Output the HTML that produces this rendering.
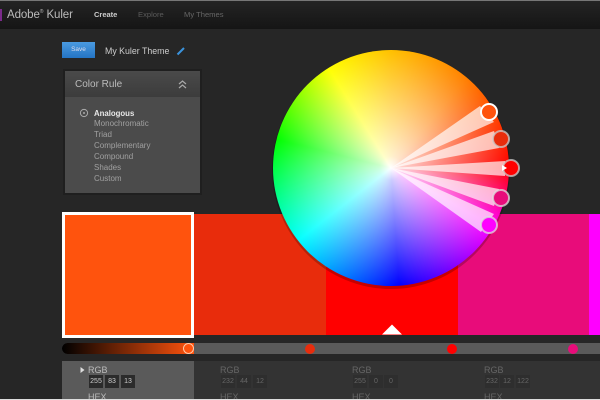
<!DOCTYPE html>
<html><head><meta charset="utf-8"><style>
html,body{margin:0;padding:0;background:#262626}
#p{position:relative;width:600px;height:400px;overflow:hidden;background:#262626;font-family:"Liberation Sans",sans-serif}
#p div{position:absolute}
.t{white-space:nowrap}
.box{background:#2b2b2b;height:13px;top:375px;font-size:7px;line-height:13px;text-align:center;color:#ccc}
.l{font-size:9px;color:#bbb;white-space:nowrap}
#p .d{color:#666}
#p .dbox{background:#2e2e2e;color:#666}
.rule{left:94px;font-size:8px;color:#a0a0a0;white-space:nowrap;line-height:11px}
</style></head><body><div id="p">
<div style="left:0;top:0;width:600px;height:1px;background:#777"></div>
<div style="left:0;top:1px;width:600px;height:28px;background:linear-gradient(#242424,#151515)"></div>
<div style="left:0;top:9px;width:2px;height:12px;background:#7a2a8a"></div>
<div class="t" style="left:7px;top:7px;font-size:11.5px;letter-spacing:-.1px;line-height:16px;color:#bbb">Adobe<sup style="font-size:5px;line-height:0">®</sup> Kuler</div>
<div class="t" style="left:94px;top:10px;font-size:7.5px;line-height:10px;font-weight:bold;color:#ccc">Create</div>
<div class="t" style="left:138px;top:10px;font-size:7.6px;line-height:10px;color:#5a5a5a">Explore</div>
<div class="t" style="left:184px;top:10px;font-size:7.6px;line-height:10px;color:#666">My Themes</div>

<div style="left:62px;top:42px;width:33px;height:16px;background:linear-gradient(#4a9ae0,#2474c4);font-size:6.5px;line-height:16px;text-align:center;color:#dde">Save</div>
<div class="t" style="left:105px;top:45px;font-size:8.8px;line-height:12px;color:#ccc">My Kuler Theme</div>
<svg style="position:absolute;left:176px;top:46px" width="10" height="10"><path d="M1.5 8.5L8 2" stroke="#3a93dc" stroke-width="2" fill="none"/></svg>

<div style="left:63px;top:69px;width:139px;height:126px;background:#1f1f1f"></div>
<div style="left:65px;top:71px;width:135px;height:122px;background:#4b4b4b"></div>
<div style="left:65px;top:71px;width:135px;height:26px;background:linear-gradient(#4a4a4a,#3c3c3c)"></div>
<div class="t" style="left:75px;top:78px;font-size:10px;line-height:13px;color:#bbb">Color Rule</div>
<svg style="position:absolute;left:177px;top:79px" width="11" height="11"><path d="M2 5L5.5 2L9 5M2 9L5.5 6L9 9" stroke="#aaa" stroke-width="1.2" fill="none"/></svg>
<svg style="position:absolute;left:79px;top:108px" width="10" height="10"><circle cx="5" cy="5" r="3.6" fill="none" stroke="#aaa" stroke-width="1"/><circle cx="5" cy="5" r="1" fill="#aaa"/></svg>
<div class="rule" style="top:107.5px;color:#e8e8e8;font-weight:bold;font-size:7.8px">Analogous</div>
<div class="rule" style="top:118px">Monochromatic</div>
<div class="rule" style="top:129px">Triad</div>
<div class="rule" style="top:140px">Complementary</div>
<div class="rule" style="top:151px">Compound</div>
<div class="rule" style="top:162px">Shades</div>
<div class="rule" style="top:173px">Custom</div>

<div style="left:194px;top:214px;width:132px;height:121px;background:#e82c0c"></div>
<div style="left:326px;top:214px;width:132px;height:121px;background:#ff0000"></div>
<div style="left:458px;top:214px;width:131px;height:121px;background:#e80c7a"></div>
<div style="left:589px;top:214px;width:11px;height:121px;background:#ff00ff"></div>
<div style="left:62px;top:212px;width:126px;height:120px;border:3px solid #fff;background:#ff530d"></div>
<svg style="position:absolute;left:381px;top:324px" width="22" height="11"><path d="M1 10.5L11 0.5L21 10.5Z" fill="#fff"/></svg>

<div style="left:272px;top:50px;width:238px;height:239px;border-radius:50%;background:rgba(0,0,0,.22)"></div>
<div style="left:273px;top:50px;width:236px;height:236px;border-radius:50%;background:radial-gradient(circle closest-side,#fff 0,rgba(255,255,255,.8) 10%,rgba(255,255,255,0) 100%),conic-gradient(from 0deg,#ffc000 0deg,#ff7f00 40deg,#ff0000 90deg,#ff00ff 120deg,#0000ff 176deg,#00ffff 232deg,#00ff00 284deg,#ffff00 328deg,#ffc000 360deg)"></div>
<svg style="position:absolute;left:0;top:0" width="600" height="400">
<g fill="#fff" fill-opacity=".68">
<path d="M391 168L480 106L494 122Z"/>
<path d="M391 168L494 131L499 148Z"/>
<path d="M391 168L505 161L505 176Z"/>
<path d="M391 168L499 189L494 206Z"/>
<path d="M391 168L494 214L481 232Z"/>
</g>
<circle cx="489" cy="112" r="8" fill="#ff530d" stroke="#fff" stroke-width="2"/>
<circle cx="501" cy="139" r="8" fill="#e82c0c" stroke="#ccc" stroke-opacity=".75" stroke-width="2"/>
<circle cx="511" cy="168" r="8" fill="#ff0000" stroke="#ccc" stroke-opacity=".75" stroke-width="2"/>
<circle cx="501" cy="198" r="8" fill="#e80c7a" stroke="#ddd" stroke-opacity=".75" stroke-width="2"/>
<circle cx="489" cy="225" r="8" fill="#ff00ff" stroke="#ddd" stroke-opacity=".75" stroke-width="2"/>
<path d="M502 165L507 168L502 171Z" fill="#fff"/>
</svg>

<div style="left:62px;top:343px;width:538px;height:11px;background:#5a5a5a;border-radius:6px 0 0 6px"></div>
<div style="left:62px;top:343px;width:132px;height:11px;border-radius:6px 0 0 6px;background:linear-gradient(90deg,#000,#ff530d)"></div>
<div style="left:183px;top:343px;width:9px;height:9px;border-radius:50%;border:1px solid #ffc9a8;background:#ff530d"></div>
<div style="left:305px;top:343px;width:10px;height:10px;margin-top:.5px;border-radius:50%;background:#e82c0c"></div>
<div style="left:447px;top:343px;width:10px;height:10px;margin-top:.5px;border-radius:50%;background:#f00"></div>
<div style="left:568px;top:343px;width:10px;height:10px;margin-top:.5px;border-radius:50%;background:#e80c7a"></div>

<div style="left:62px;top:361px;width:132px;height:39px;background:#5a5a5a"></div>
<div style="left:194px;top:361px;width:406px;height:39px;background:#333"></div>
<svg style="position:absolute;left:80px;top:366px" width="5" height="8"><path d="M0.5 1L4.5 4L0.5 7Z" fill="#ddd"/></svg>
<div class="l" style="left:88px;top:365px">RGB</div>
<div class="box" style="left:89px;width:14px">255</div><div class="box" style="left:105px;width:14px">83</div><div class="box" style="left:121px;width:14px">13</div>
<div class="l" style="left:88px;top:392px">HEX</div>

<div class="l d" style="left:220px;top:365px">RGB</div>
<div class="box dbox" style="left:221px;width:14px">232</div><div class="box dbox" style="left:237px;width:14px">44</div><div class="box dbox" style="left:253px;width:14px">12</div>
<div class="l d" style="left:220px;top:392px">HEX</div>

<div class="l d" style="left:352px;top:365px">RGB</div>
<div class="box dbox" style="left:353px;width:14px">255</div><div class="box dbox" style="left:369px;width:14px">0</div><div class="box dbox" style="left:384px;width:14px">0</div>
<div class="l d" style="left:352px;top:392px">HEX</div>

<div class="l d" style="left:484px;top:365px">RGB</div>
<div class="box dbox" style="left:485px;width:14px">232</div><div class="box dbox" style="left:500px;width:14px">12</div><div class="box dbox" style="left:516px;width:14px">122</div>
<div class="l d" style="left:484px;top:392px">HEX</div>

<div style="left:0;top:399px;width:600px;height:1px;background:#ddd"></div>
</div></body></html>
